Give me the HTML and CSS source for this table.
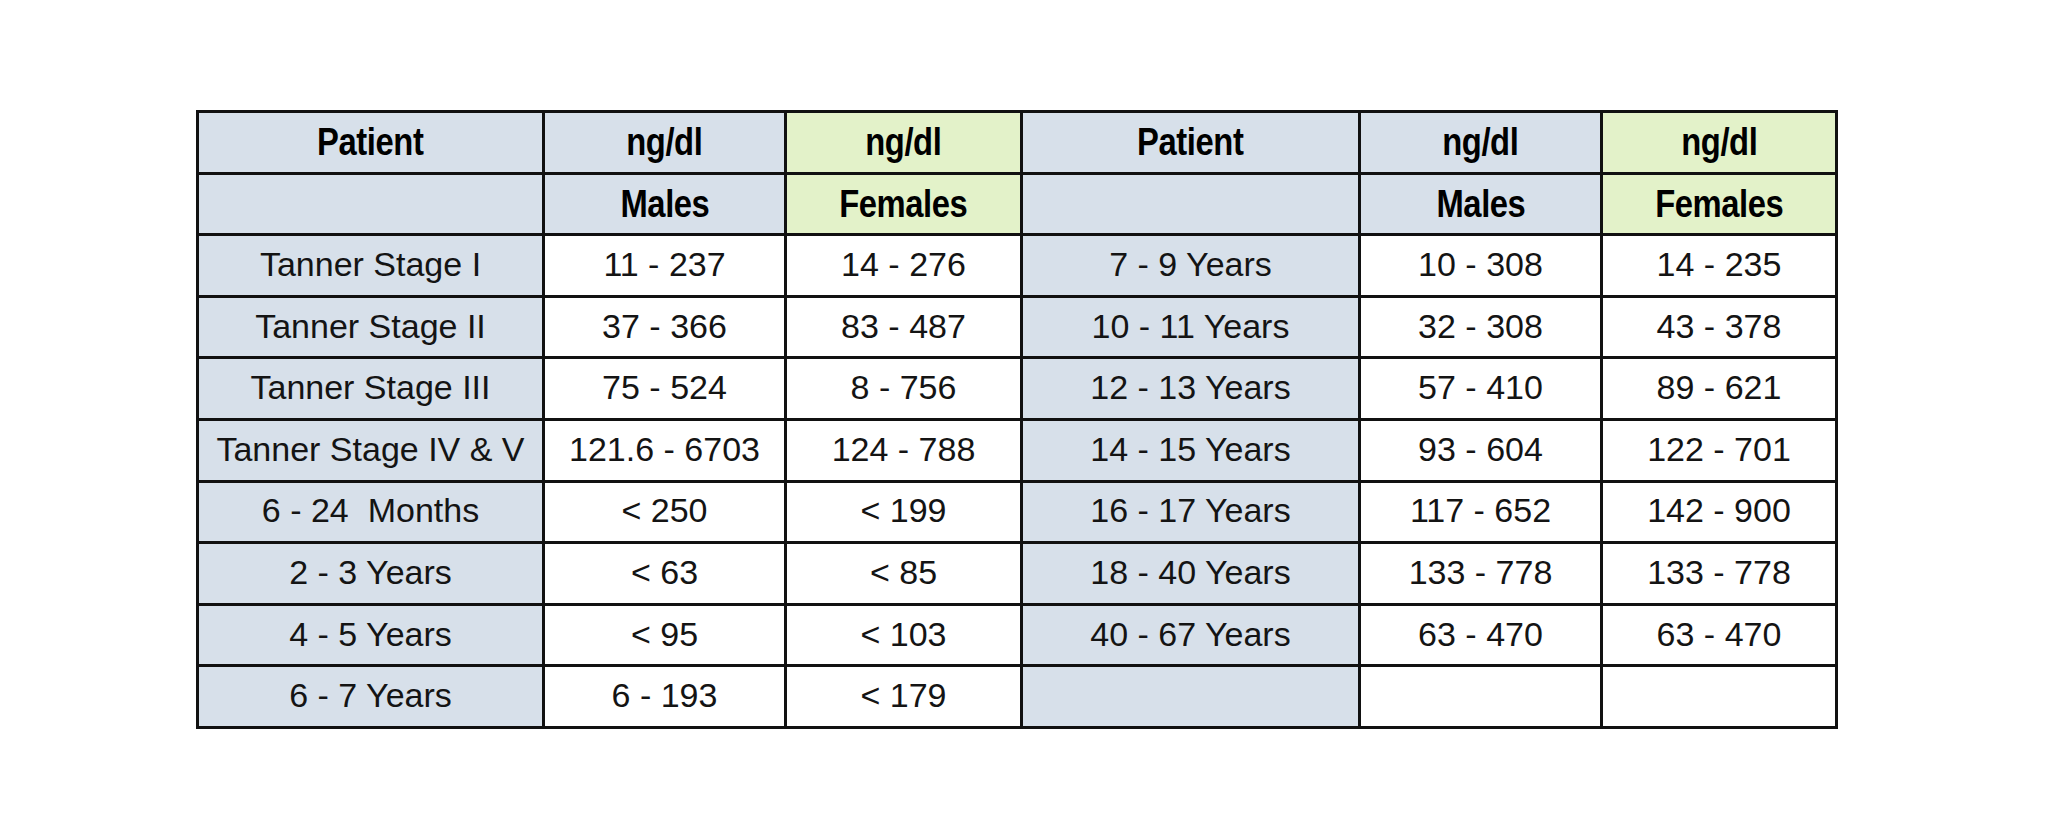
FILE: index.html
```html
<!DOCTYPE html>
<html>
<head>
<meta charset="utf-8">
<link rel="stylesheet" href="styles.css">
</head>
<body>
<div class="page">
  <table class="ref-table">
    <colgroup>
      <col class="c-patient"><col class="c-male"><col class="c-female">
      <col class="c-patient2"><col class="c-male"><col class="c-female2">
    </colgroup>
    <thead>
      <tr>
        <th class="blue"><span>Patient</span></th><th class="blue"><span>ng/dl</span></th><th class="green"><span>ng/dl</span></th>
        <th class="blue"><span>Patient</span></th><th class="blue"><span>ng/dl</span></th><th class="green"><span>ng/dl</span></th>
      </tr>
      <tr>
        <th class="blue"></th><th class="blue"><span>Males</span></th><th class="green"><span>Females</span></th>
        <th class="blue"></th><th class="blue"><span>Males</span></th><th class="green"><span>Females</span></th>
      </tr>
    </thead>
    <tbody>
      <tr><td class="blue">Tanner Stage I</td><td>11 - 237</td><td>14 - 276</td><td class="blue">7 - 9 Years</td><td>10 - 308</td><td>14 - 235</td></tr>
      <tr><td class="blue">Tanner Stage II</td><td>37 - 366</td><td>83 - 487</td><td class="blue">10 - 11 Years</td><td>32 - 308</td><td>43 - 378</td></tr>
      <tr><td class="blue">Tanner Stage III</td><td>75 - 524</td><td>8 - 756</td><td class="blue">12 - 13 Years</td><td>57 - 410</td><td>89 - 621</td></tr>
      <tr><td class="blue">Tanner Stage IV &amp; V</td><td>121.6 - 6703</td><td>124 - 788</td><td class="blue">14 - 15 Years</td><td>93 - 604</td><td>122 - 701</td></tr>
      <tr><td class="blue">6 - 24&nbsp; Months</td><td>&lt; 250</td><td>&lt; 199</td><td class="blue">16 - 17 Years</td><td>117 - 652</td><td>142 - 900</td></tr>
      <tr><td class="blue">2 - 3 Years</td><td>&lt; 63</td><td>&lt; 85</td><td class="blue">18 - 40 Years</td><td>133 - 778</td><td>133 - 778</td></tr>
      <tr><td class="blue">4 - 5 Years</td><td>&lt; 95</td><td>&lt; 103</td><td class="blue">40 - 67 Years</td><td>63 - 470</td><td>63 - 470</td></tr>
      <tr><td class="blue">6 - 7 Years</td><td>6 - 193</td><td>&lt; 179</td><td class="blue"></td><td></td><td></td></tr>
    </tbody>
  </table>
</div>
</body>
</html>
```
FILE: styles.css
```css
html, body {
  margin: 0;
  padding: 0;
  background: #ffffff;
}

.page {
  padding: 110px 0 0 196px;
}

.ref-table {
  border-collapse: collapse;
  table-layout: fixed;
  width: 1639px;
  font-family: "Liberation Sans", Arial, sans-serif;
  color: #141414;
}

.c-patient { width: 346px; }
.c-male { width: 242px; }
.c-female { width: 236px; }
.c-patient2 { width: 338px; }
.c-female2 { width: 235px; }

.ref-table th,
.ref-table td {
  border: 3px solid #111111;
  height: 58.6px;
  padding: 0;
  text-align: center;
  vertical-align: middle;
  white-space: nowrap;
}

.ref-table td {
  height: 56.6px;
  padding-bottom: 2px;
  font-size: 34px;
  font-weight: 400;
  background: #ffffff;
}

.ref-table th {
  font-family: "Liberation Sans", Arial, sans-serif;
  font-size: 39px;
  font-weight: 700;
  color: #000000;
  letter-spacing: -0.5px;
}

.ref-table th span {
  display: inline-block;
  transform: scaleX(0.84);
}

.ref-table .blue { background: #d7e0ea; }
.ref-table .green { background: #e3f2c9; }
```
